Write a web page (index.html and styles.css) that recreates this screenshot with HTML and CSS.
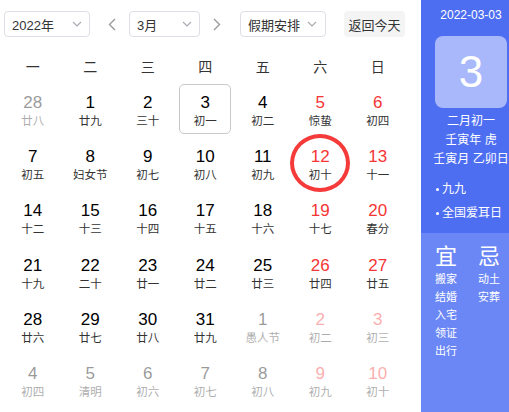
FILE: index.html
```html
<!DOCTYPE html>
<html lang="zh">
<head>
<meta charset="utf-8">
<title>万年历</title>
<link rel="stylesheet" href="styles.css">
</head>
<body>
<div class="page">
  <div class="main">
    <div class="toolbar">
      <div class="select sel-year"><span>2022年</span><svg width="10" height="6" viewBox="0 0 10 6"><path d="M1 1 L5 5 L9 1" fill="none" stroke="#a8abb2" stroke-width="1.2"/></svg></div>
      <div class="arrow arrow-left"><svg width="8" height="13" viewBox="0 0 8 13"><path d="M7 1 L1.5 6.5 L7 12" fill="none" stroke="#9a9a9a" stroke-width="1.4"/></svg></div>
      <div class="select sel-month"><span>3月</span><svg width="10" height="6" viewBox="0 0 10 6"><path d="M1 1 L5 5 L9 1" fill="none" stroke="#a8abb2" stroke-width="1.2"/></svg></div>
      <div class="arrow arrow-right"><svg width="8" height="13" viewBox="0 0 8 13"><path d="M1 1 L6.5 6.5 L1 12" fill="none" stroke="#9a9a9a" stroke-width="1.4"/></svg></div>
      <div class="select sel-holiday"><span>假期安排</span><svg width="10" height="6" viewBox="0 0 10 6"><path d="M1 1 L5 5 L9 1" fill="none" stroke="#a8abb2" stroke-width="1.2"/></svg></div>
      <div class="btn-today">返回今天</div>
    </div>
    <div class="weekdays">
      <span>一</span><span>二</span><span>三</span><span>四</span><span>五</span><span>六</span><span>日</span>
    </div>
    <div class="grid">
      <div class="cell other"><span class="num">28</span><span class="lunar">廿八</span></div>
      <div class="cell"><span class="num">1</span><span class="lunar">廿九</span></div>
      <div class="cell"><span class="num">2</span><span class="lunar">三十</span></div>
      <div class="cell today"><span class="num">3</span><span class="lunar">初一</span></div>
      <div class="cell"><span class="num">4</span><span class="lunar">初二</span></div>
      <div class="cell red"><span class="num">5</span><span class="lunar">惊蛰</span></div>
      <div class="cell red"><span class="num">6</span><span class="lunar">初四</span></div>

      <div class="cell"><span class="num">7</span><span class="lunar">初五</span></div>
      <div class="cell"><span class="num">8</span><span class="lunar">妇女节</span></div>
      <div class="cell"><span class="num">9</span><span class="lunar">初七</span></div>
      <div class="cell"><span class="num">10</span><span class="lunar">初八</span></div>
      <div class="cell"><span class="num">11</span><span class="lunar">初九</span></div>
      <div class="cell red circled"><span class="num">12</span><span class="lunar">初十</span></div>
      <div class="cell red"><span class="num">13</span><span class="lunar">十一</span></div>

      <div class="cell"><span class="num">14</span><span class="lunar">十二</span></div>
      <div class="cell"><span class="num">15</span><span class="lunar">十三</span></div>
      <div class="cell"><span class="num">16</span><span class="lunar">十四</span></div>
      <div class="cell"><span class="num">17</span><span class="lunar">十五</span></div>
      <div class="cell"><span class="num">18</span><span class="lunar">十六</span></div>
      <div class="cell red"><span class="num">19</span><span class="lunar">十七</span></div>
      <div class="cell red"><span class="num">20</span><span class="lunar">春分</span></div>

      <div class="cell"><span class="num">21</span><span class="lunar">十九</span></div>
      <div class="cell"><span class="num">22</span><span class="lunar">二十</span></div>
      <div class="cell"><span class="num">23</span><span class="lunar">廿一</span></div>
      <div class="cell"><span class="num">24</span><span class="lunar">廿二</span></div>
      <div class="cell"><span class="num">25</span><span class="lunar">廿三</span></div>
      <div class="cell red"><span class="num">26</span><span class="lunar">廿四</span></div>
      <div class="cell red"><span class="num">27</span><span class="lunar">廿五</span></div>

      <div class="cell"><span class="num">28</span><span class="lunar">廿六</span></div>
      <div class="cell"><span class="num">29</span><span class="lunar">廿七</span></div>
      <div class="cell"><span class="num">30</span><span class="lunar">廿八</span></div>
      <div class="cell"><span class="num">31</span><span class="lunar">廿九</span></div>
      <div class="cell other"><span class="num">1</span><span class="lunar">愚人节</span></div>
      <div class="cell other red"><span class="num">2</span><span class="lunar">初二</span></div>
      <div class="cell other red"><span class="num">3</span><span class="lunar">初三</span></div>

      <div class="cell other"><span class="num">4</span><span class="lunar">初四</span></div>
      <div class="cell other"><span class="num">5</span><span class="lunar">清明</span></div>
      <div class="cell other"><span class="num">6</span><span class="lunar">初六</span></div>
      <div class="cell other"><span class="num">7</span><span class="lunar">初七</span></div>
      <div class="cell other"><span class="num">8</span><span class="lunar">初八</span></div>
      <div class="cell other red"><span class="num">9</span><span class="lunar">初九</span></div>
      <div class="cell other red"><span class="num">10</span><span class="lunar">初十</span></div>
    </div>
  </div>
  <div class="side">
    <div class="side-top">
      <div class="side-date">2022-03-03</div>
      <div class="big-day">3</div>
      <div class="side-lunar">
        <div>二月初一</div>
        <div>壬寅年 虎</div>
        <div>壬寅月 乙卯日</div>
      </div>
      <ul class="festivals">
        <li>九九</li>
        <li>全国爱耳日</li>
      </ul>
    </div>
    <div class="side-bottom">
      <div class="yj-col">
        <div class="yj-title">宜</div>
        <div class="yj-item">搬家</div>
        <div class="yj-item">结婚</div>
        <div class="yj-item">入宅</div>
        <div class="yj-item">领证</div>
        <div class="yj-item">出行</div>
      </div>
      <div class="yj-col">
        <div class="yj-title">忌</div>
        <div class="yj-item">动土</div>
        <div class="yj-item">安葬</div>
      </div>
    </div>
  </div>
</div>
</body>
</html>
```

FILE: styles.css
```css
* { box-sizing: border-box; }
html, body { margin: 0; padding: 0; background: #fff; }
body {
  font-family: "Liberation Sans", "Noto Sans CJK SC", sans-serif;
  color: #333;
}
.page {
  display: flex;
  width: 509px;
  height: 412px;
  overflow: hidden;
}
.main {
  width: 421px;
  flex-shrink: 0;
  padding-left: 4px;
}
.toolbar {
  display: flex;
  align-items: center;
  padding-top: 11px;
  height: 37px;
}
.select {
  height: 26px;
  border: 1px solid #dcdfe6;
  border-radius: 4px;
  display: flex;
  align-items: center;
  justify-content: space-between;
  padding: 0 7px 0 7px;
  font-size: 13px;
  color: #333;
}
.select svg { display: block; }
.sel-year { width: 86px; }
.sel-month { width: 71px; }
.sel-holiday { width: 86px; padding-right: 8px; }
.arrow { display: flex; align-items: center; }
.arrow svg { display: block; }
.arrow-left { margin: 0 13px 0 18px; }
.arrow-right { margin: 0 19px 0 13px; }
.btn-today {
  margin-left: 18px;
  width: 61px;
  height: 26px;
  border-radius: 4px;
  background: #f4f4f5;
  font-size: 13px;
  color: #333;
  display: flex;
  align-items: center;
  justify-content: center;
}
.weekdays {
  display: grid;
  grid-template-columns: repeat(7, 57.5px);
  height: 47px;
  padding-top: 20px;
  font-size: 14px;
  line-height: 20px;
  color: #333;
  text-align: center;
}
.grid {
  display: grid;
  grid-template-columns: repeat(7, 57.5px);
  grid-auto-rows: 50px;
  row-gap: 4.2px;
}
.cell {
  position: relative;
  width: 52px;
  height: 50px;
  justify-self: center;
  display: flex;
  flex-direction: column;
  align-items: center;
  padding-top: 7px;
  border: 1px solid transparent;
  border-radius: 5px;
}
.num {
  font-size: 17px;
  line-height: 22px;
  color: #000;
}
.lunar {
  font-size: 11.5px;
  line-height: 14px;
  color: #333;
}
.cell.red .num { color: #f53535; }
.cell.other { opacity: 0.4; }
.cell.today { border-color: #c8c8c8; }
.cell.circled::after {
  content: "";
  position: absolute;
  left: -5px;
  top: -5px;
  width: 60px;
  height: 58px;
  border: 4.5px solid #f53a3a;
  border-radius: 50%;
  box-sizing: border-box;
}
.side {
  width: 100px;
  flex-shrink: 0;
  display: flex;
  flex-direction: column;
  color: #fff;
}
.side-top {
  height: 233px;
  background: #4e6ef2;
  display: flex;
  flex-direction: column;
  align-items: center;
  padding-top: 6px;
}
.side-date {
  font-size: 12px;
  line-height: 18px;
}
.big-day {
  margin-top: 12px;
  width: 72px;
  height: 72px;
  border-radius: 8px;
  background: #a8b8fa;
  font-size: 44px;
  display: flex;
  align-items: center;
  justify-content: center;
}
.side-lunar {
  margin-top: 4px;
  font-size: 12px;
  line-height: 19px;
  text-align: center;
}
.festivals {
  list-style: none;
  margin: 8px 0 0 0;
  padding: 0 0 0 15px;
  align-self: stretch;
  font-size: 12px;
  line-height: 24px;
}
.festivals li {
  display: flex;
  align-items: center;
}
.festivals li::before {
  content: "";
  width: 3px;
  height: 3px;
  border-radius: 50%;
  background: #fff;
  margin-right: 3px;
}
.side-bottom {
  flex: 1;
  background: #6b87f6;
  display: flex;
  padding: 11px 0 0 14px;
}
.yj-col { width: 52px; }
.yj-title {
  font-size: 22px;
  line-height: 26px;
}
.yj-item {
  font-size: 11px;
  line-height: 18px;
}
```
